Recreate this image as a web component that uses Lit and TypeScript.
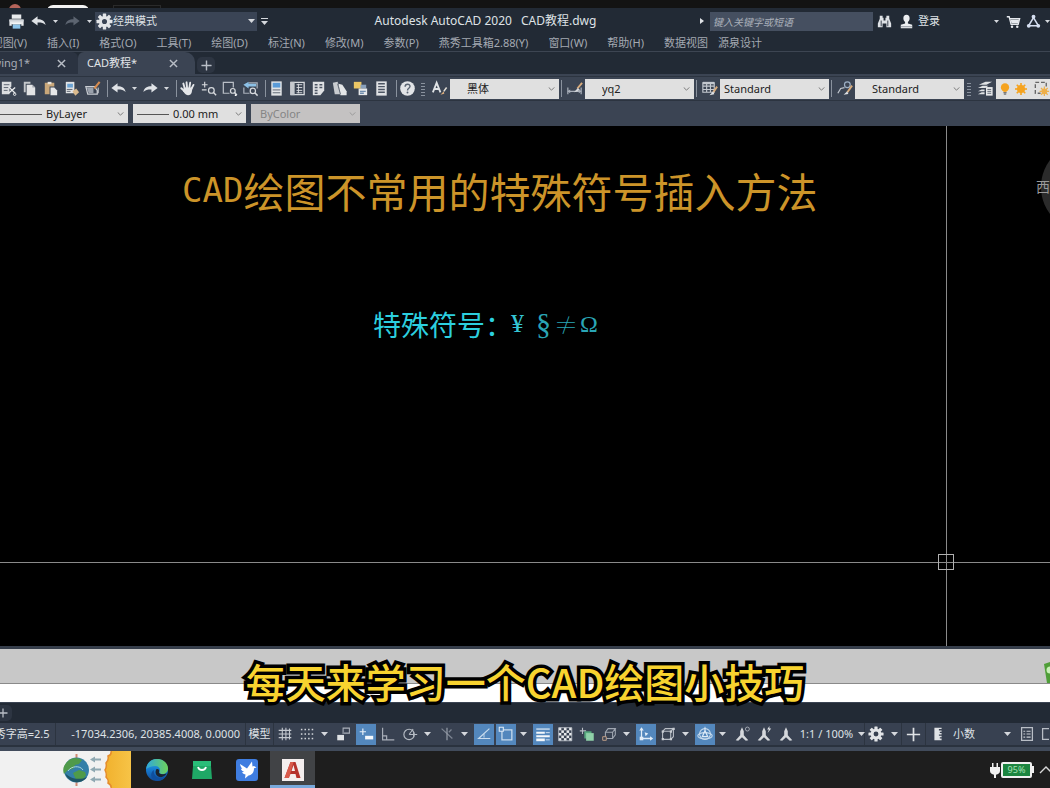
import { LitElement, html, css, svg, nothing } from "lit";
import { customElement, property } from "lit/decorators.js";
import { classMap } from "lit/directives/class-map.js";

const gearTeeth = [0, 45, 90, 135, 180, 225, 270, 315];
const gear = (fill: string) => svg`
  <g fill=${fill}>${gearTeeth.map(
    (a) => svg`<rect x="8.2" y="1.6" width="3.6" height="5" rx=".6" transform="rotate(${a} 10 10)"/>`
  )}</g><circle cx="10" cy="10" r="4.3" fill="none" stroke=${fill} stroke-width="3.2"/>`;

const undo = (c: string) => svg`<path fill=${c} d="M2.500 9.500 9 4.600v3.100c4.600 0 7.600 1.600 8.500 6-2.400-2.300-4.800-2.700-8.500-2.600v3.200z"/>`;
const redo = (c: string) => svg`<path fill=${c} d="M17.500 9.500 11 4.600v3.100c-4.600 0-7.600 1.600-8.500 6 2.400-2.300 4.800-2.700 8.500-2.600v3.200z"/>`;
const annot = svg`<path fill="#d5d8dc" d="M10 2.500 12 7v4.500l5 5.500-2.800.5L10 13.500l-4.200 4L3 17l5-5.500V7z"/>`;
const brush = svg`<path d="m18 4-5 6" stroke="#d9ac7c" stroke-width="2"/><path d="m13.500 9.500-4 4.500 4-1 2-2z" fill="#d5d8dc"/>`;

const glyphs: Record<string, unknown> = {
  printer: svg`<path fill="#e9ebed" d="M5 2.500h10V7H5zM2.500 8h15v6.500H15v-2H5v2H2.500z"/><path fill="#cfd3d8" d="M2.500 8h15v2h-15z"/><path fill="#8cc4ea" d="M6 13h8v4.500H6z"/><path stroke="#fff" d="M5.500 12.500h9" />`,
  undo: undo("#dfe2e6"),
  redo: redo("#dfe2e6"),
  redoOff: redo("#5c6470"),
  gear: gear("#e3e5e8"),
  binoculars: svg`<path fill="#dfe2e6" d="M5 4h3v2h1v3h2V6h1V4h3v3l2 5v4h-5v-4H8v4H3v-4l2-5z"/><path d="M6.500 9v6M13.500 9v6" stroke="#333b48"/>`,
  user: svg`<path fill="#eceef0" d="M10 3c2.200 0 3.300 1.500 3.300 3.600 0 1.700-.8 3.100-1.800 3.900v1.500l4.500 1.500V17H4v-3.500L8.500 12v-1.500c-1-.8-1.800-2.200-1.800-3.900C6.700 4.500 7.800 3 10 3z"/><path d="M4 15.500h12" stroke="#8e949e"/>`,
  cart: svg`<path d="M4 5h2.500l2 8H16l1.500-6H7" fill="none" stroke="#e6e9ee" stroke-width="1.400"/><path fill="#e6e9ee" d="M8 8h9l-1 4H9z"/><circle cx="9.500" cy="15.500" r="1.300" fill="#e6e9ee"/><circle cx="15" cy="15.500" r="1.300" fill="#e6e9ee"/>`,
  triangle: svg`<path d="M10 6 4.800 14.500h10.400z" fill="none" stroke="#d5def0" stroke-width="1.600"/><circle cx="10" cy="5" r="2" fill="#d5def0"/><circle cx="5" cy="14.500" r="2" fill="#d5def0"/><circle cx="15" cy="14.500" r="2" fill="#d5def0"/>`,
  cut: svg`<path fill="#dadcdf" d="M3 3h10v5l-2 2v6H3z"/><path d="M5 6h6M5 9h5M5 12h4" stroke="#5a6270"/><path d="m10 8 7 7M17 9l-7 6" stroke="#e8eaec" stroke-width="1.400"/><circle cx="16.500" cy="16" r="1.300" fill="none" stroke="#e8eaec"/>`,
  copy: svg`<path fill="#c3c6ca" d="M4 3h7v2H6v9H4z"/><path fill="#e2e3e5" d="M7 6h6l3 3v8H7z"/><path fill="#9ea3ab" d="M13 6v3h3z"/>`,
  paste: svg`<path fill="#c9a77a" d="M4 4h10v4H9v8H4z"/><path fill="#e8e4dc" d="M7 3h4v2.500H7z"/><path fill="#e6e7e9" d="M10 9h4l3 3v5h-7z"/>`,
  match: svg`<path fill="#e2e4e6" d="M4 3h9v12H4z"/><path fill="#6ba3d4" d="M5.500 5h6v4h-6z"/><path stroke="#59616e" d="M5 11h6M5 13h4"/><path fill="#d9b98d" d="m11 13 4-3 3 4-4 3.500z"/>`,
  block: svg`<path fill="none" stroke="#c9cdd3" stroke-width="1.300" d="M3 8h9l3 4v4H5z"/><path fill="#9aa1ac" d="M4 9h7v6H6z"/><path d="m17.500 3-5.500 7" stroke="#d58b4f" stroke-width="2.200"/><path d="M16 9v6" stroke="#dadde1"/>`,
  hand: svg`<path fill="none" stroke="#e4e6e9" stroke-width="2" stroke-linecap="round" d="M7 9.500 5.600 4.800M9.500 9 9 3.500M12 9l.8-5M14.300 10l2-3.800M7 13 3.500 9.700"/><path fill="#e4e6e9" d="M6 9h9.300l-.8 5c-.5 2-2 3.200-3.800 3.200S7 15.500 5.500 13z"/>`,
  zoomRt: svg`<path d="M3 6h6M6 3v6M3 11.500h5" stroke="#d7dade" stroke-width="1.200"/><circle cx="13" cy="12" r="3" fill="none" stroke="#d7dade" stroke-width="1.300"/><path d="m15.300 14.300 2.700 2.700" stroke="#d7dade" stroke-width="1.500"/>`,
  zoomWin: svg`<path d="M14 9V3.500H3.500V15H10" fill="none" stroke="#b9bec6" stroke-width="1.300"/><circle cx="13.500" cy="12.500" r="2.500" fill="none" stroke="#d7dade" stroke-width="1.300"/><path d="m15.300 14.300 2.500 2.500" stroke="#d7dade" stroke-width="1.500"/><circle cx="16.500" cy="17" r="1" fill="#fff"/>`,
  zoomPrev: svg`<path d="M3 9v6h6M17 10V4H8" fill="none" stroke="#aab0ba" stroke-width="1.300"/><path fill="#8cc0e6" d="M2.500 6 8 3v2h8v3H8v2z"/><circle cx="12.500" cy="12.500" r="2.800" fill="none" stroke="#d7dade" stroke-width="1.300"/><path d="m14.500 14.500 3 3" stroke="#d7dade" stroke-width="1.500"/>`,
  props: svg`<path fill="#e2e4e6" d="M4.500 2.500h11v15h-11z"/><path fill="#5a9bd8" d="M6 4h8v5H6z"/><path d="M6 11.500h8M6 14.500h8" stroke="#5a6270"/>`,
  center: svg`<path fill="none" stroke="#d7dade" stroke-width="1.400" d="M3 3.500h14v13H3z"/><path fill="#c5c9ce" d="M3 3h4v14H3z"/><path d="M9 6h6M9 9h6M9 12h6M9 14.500h6M11 5v10" stroke="#d7dade"/>`,
  palette: svg`<path fill="#dfe1e4" d="M4 3h12v9l-4 5H4z"/><path d="M6 6h3M11 6h3M6 9h3M11 9h3M6 12h3M6 15h3" stroke="#4c5563" stroke-width="1.600"/>`,
  sheets: svg`<path fill="#c9ccd0" d="m3 4 5-1 4 13H5z"/><path fill="#e4e6e8" d="m9 5 4 1 4.500 7v4H11z"/><path d="m8 5 3 11" stroke="#59616e"/>`,
  markup: svg`<path fill="#ecc765" d="M3 3h8v7H3z"/><path fill="#8aa0ba" d="M10 6h6v4h-6z"/><path fill="#e6e8ea" d="M8 10h9v7H8z"/><path stroke="#6f8cad" stroke-width="1.500" d="M9.500 13h6M9.500 15h4"/>`,
  calc: svg`<path fill="#dfe1e4" d="M4.500 2.500h11v15h-11z"/><path d="M6.500 5h7M6.500 8h7M6.500 11h7M6.500 14h7" stroke="#4c5563" stroke-width="1.500"/>`,
  help: svg`<circle cx="10" cy="10" r="7.700" fill="#e2e4e7"/><path d="M7.500 8.200c0-3.600 5.300-3.400 5.100-.3-.1 1.800-2.600 1.900-2.600 4.100" fill="none" stroke="#5a6472" stroke-width="1.500"/><circle cx="10" cy="14.200" r="1" fill="#5a6472"/>`,
  textStyle: svg`<path d="m3 14 4-10 4 10M4.700 10.500h4.600" fill="none" stroke="#dfe2e5" stroke-width="1.900"/><path d="m17.500 9-3 4" stroke="#e4e0d8" stroke-width="1.600"/><path d="M14.500 13 11 16.500l4-1z" fill="#d9ac7c"/>`,
  dimStyle: svg`<path d="M3 9v7M17 9v7M3 13h13" stroke="#aab0ba" stroke-width="1.300"/><path d="m2.500 13 3-2v4zM17.500 13l-3-2v4z" fill="#aab0ba"/>${brush}`,
  tableStyle: svg`<path d="M3 4h12v10H3zM3 7.500h12M3 11h12M7 4v10M11 4v10" fill="none" stroke="#c3c8cf" stroke-width="1.200"/><path fill="#c3c8cf" d="M3 3h12v2.500H3z"/><path d="m18 8-4 6" stroke="#d9ac7c" stroke-width="2"/><path d="m14 13-4 4 5-1z" fill="#dfe2e6"/>`,
  leaderStyle: svg`<path d="m3 15 3-5 4-1" fill="none" stroke="#c3c8cf" stroke-width="1.300"/><circle cx="13" cy="6" r="3" fill="none" stroke="#9eb0c5" stroke-width="1.300"/><path d="m18 7-5 7" stroke="#d9ac7c" stroke-width="2"/><path d="m13 13-4 3.500 5-.8z" fill="#dfe2e6"/>`,
  layers: svg`<path fill="#dfe2e5" d="m3 6 7-3h7l-6 3zM2 9.500 7 7h6l-3 2.500zM2 13l4-2h3v2zM2 16l4-2h3v2z"/><path fill="#e8eaec" d="M10.500 8.500h7v9h-7z"/><path stroke="#5a6270" d="M12 11h4M12 13h4M12 15h4"/>`,
  bulb: svg`<circle cx="10" cy="8" r="5.200" fill="#f5a31f"/><path fill="#f5a31f" d="M8 11h4v2.500H8z"/><path stroke="#777" stroke-width="1.500" d="M8 14.500h4M8.500 16.500h3"/>`,
  sun: svg`<g stroke="#f5a31f" stroke-width="2">${[0, 45, 90, 135].map((a) => svg`<path d="M10 2.500v15" transform="rotate(${a} 10 10)"/>`)}</g><circle cx="10" cy="10" r="5" fill="#f5a31f"/>`,
  viewport: svg`<path d="M15 8V3.500H3.500V15H9" fill="none" stroke="#666" stroke-width="1.400" stroke-dasharray="4 2"/><g stroke="#efb04a" stroke-width="1.300">${[0, 45, 90, 135].map((a) => svg`<path d="M13 8v10" transform="rotate(${a} 13 13)"/>`)}</g><circle cx="13" cy="13" r="3" fill="#efb04a"/>`,
  grid: svg`<path d="M7 3v14M11 3v14M15 4v12M3 6h14M3 10h14M3 14h14" stroke="#c3c8cf" stroke-width="1.200"/>`,
  dots: svg`<g fill="#d0d4d9">${[4, 8, 12, 16].flatMap((x) => [5, 10, 15].map((y) => svg`<rect x=${x - 0.8} y=${y - 0.8} width="1.700" height="1.700"/>`))}</g>`,
  infer: svg`<path fill="#dfe2e5" d="M2.500 11H10v6H2.500z"/><path d="M9 10V3.500h7V9h-6" fill="none" stroke="#aab0ba" stroke-width="1.200"/>`,
  dyn: svg`<path d="M3 7.500h7M6.500 4v7" stroke="#e8f0f8" stroke-width="1.300"/><path fill="#f4f8fc" d="M9 12h9v4H9z"/>`,
  ortho: svg`<path d="M4 3v13.500h13M4 12h4.500v4" fill="none" stroke="#a9afb9" stroke-width="1.300"/>`,
  polar: svg`<circle cx="9" cy="10.500" r="5.800" fill="none" stroke="#b4bac3" stroke-width="1.300"/><path d="M9 10.500h9M9 10.500l4.500-6M14 8v5" stroke="#b4bac3" stroke-width="1.200"/>`,
  iso: svg`<path d="M4 4l12 11" stroke="#7d8592" stroke-width="1.400"/><path d="M10 3v14" stroke="#9aa1ac" stroke-width="1.300"/><path d="m12 8 3-3" stroke="#7d8592" stroke-width="1.400"/>`,
  track: svg`<path d="M16 4 4 15h13" fill="none" stroke="#c9dcee" stroke-width="1.300"/><path stroke="#c9dcee" d="M10 10v4" />`,
  osnap: svg`<path d="M5.500 5.500h11v11h-11z" fill="none" stroke="#c9dcee" stroke-width="1.400"/><path d="M2.500 2.500H7V7H2.500z" fill="#5387bd" stroke="#e1ecf7" stroke-width="1.200"/>`,
  weight: svg`<path stroke="#f4f8fc" d="M2.500 4.500h15" stroke-width="1.200"/><path stroke="#f4f8fc" stroke-width="2.200" d="M2.500 8.500H12M2.500 12.500h15"/><path stroke="#f4f8fc" stroke-width="3" d="M2.500 16.500H12"/><path stroke="#dce9f6" d="M13 8.500h4.500M13 16.500h4.500"/>`,
  checker: svg`<g fill="#e8eaec">${[0, 1, 2, 3, 4].flatMap((r) => [0, 1, 2, 3, 4].filter((c) => (r + c) % 2 === 0).map((c) => svg`<rect x=${3 + c * 2.9} y=${3 + r * 2.9} width="2.900" height="2.900"/>`))}</g><path d="M3 3h14.500v14.500H3z" fill="none" stroke="#b9bec6"/>`,
  cycle: svg`<path d="M5 3v7M2 6.500h7" stroke="#b9bec6" stroke-width="1.200"/><path fill="#57a97e" d="M7 7h8v8H7z"/><path fill="#8fd1a8" d="M9 9h8.500v8.500H9z"/>`,
  solid: svg`<path d="M6 8h8v7H6zM6 8l3-4h8l-3 4M17 4v7l-3 4" fill="none" stroke="#9fa6b1" stroke-width="1.200"/><path d="M3 13h4v4H3z" fill="#3a4251" stroke="#c9a58b"/>`,
  ucs: svg`<path d="M5 4v11h11" fill="none" stroke="#e1ecf7" stroke-width="1.400"/><path fill="#e1ecf7" d="M2.500 6 5 2.500 7.500 6zM14.500 12.500 18 15l-3.500 2.500zM8.500 8l4 1.500-3 3z"/><path fill="#e1ecf7" d="M3 13h4v4H3z"/>`,
  filter: svg`<path d="M4 7h9v9H4zM4 7l3-3h9v9l-3 3M13 7l3-3" fill="none" stroke="#b9bec6" stroke-width="1.200"/><path fill="#c9cdd3" d="M3 6h2.500v2.500H3zM12 6h2.500v2.500H12zM3 14.500h2.500V17H3zM12 14.500h2.500V17H12zM15 3h2.500v2.500H15z"/>`,
  gizmo: svg`<circle cx="10" cy="10" r="6" fill="none" stroke="#c9dcee" stroke-width="1.200"/><ellipse cx="10" cy="12" rx="8" ry="3.500" fill="none" stroke="#c9dcee" stroke-width="1.200"/><path d="m7 13 3-7 3 7z" fill="none" stroke="#dce9f6" stroke-width="1.300"/><path d="M10 2v4" stroke="#dce9f6"/>`,
  annoVis: svg`${annot}<circle cx="16" cy="4.500" r="2.200" fill="none" stroke="#aab0ba"/>`,
  annoAuto: svg`${annot}<path d="m16 1-2.500 4h2L14 9l4-5h-2z" fill="#dfe2e5"/>`,
  anno: annot,
  plus: svg`<path d="M10 3v14M3 10h14" stroke="#dfe2e5" stroke-width="1.800"/>`,
  ruler: svg`<path fill="#dfe2e5" d="M6 3h8v1.500h-3V6h3v1.500h-2V9h2v1.500h-3V12h3v1.500h-2V15h2v2H6z"/>`,
  list: svg`<path fill="none" stroke="#b9bec6" stroke-width="1.400" d="M4 3h12v14H4z"/><path d="M6 7h2M9.500 7H14M6 10h2M9.500 10H14M6 13.500h2M9.500 13.500H14" stroke="#c9cdd3" stroke-width="1.200"/>`,
  windowBox: svg`<path fill="none" stroke="#b9bec6" stroke-width="1.400" d="M4 4h12v12H4z"/>`,
};

@customElement("cad-icon")
class CadIcon extends LitElement {
  @property() name = "";
  static styles = css`
    :host { display: block; width: 19px; height: 19px; flex: none; }
    .art { display: block; width: 100%; height: 100%; }
  `;
  render() {
    return html`<svg class="art" viewBox="0 0 20 20" aria-hidden="true">${glyphs[this.name] ?? nothing}</svg>`;
  }
}

type Cell = { icon: string; label: string; on?: boolean } | "caret";

const editTools: (string | "caret" | "sep")[] = [
  "cut", "copy", "paste", "match", "block", "sep",
  "undo", "caret", "redo", "caret", "sep",
  "hand", "zoomRt", "zoomWin", "zoomPrev", "sep",
  "props", "center", "palette", "sheets", "markup", "calc", "sep", "help",
];

const menus = ["视图(V)", "插入(I)", "格式(O)", "工具(T)", "绘图(D)", "标注(N)", "修改(M)", "参数(P)", "燕秀工具箱2.88(Y)", "窗口(W)", "帮助(H)"];

const statusCells: Cell[] = [
  { icon: "grid", label: "栅格" }, { icon: "dots", label: "捕捉" }, "caret",
  { icon: "infer", label: "推断约束" }, { icon: "dyn", label: "动态输入", on: true },
  { icon: "ortho", label: "正交" }, { icon: "polar", label: "极轴追踪" }, "caret",
  { icon: "iso", label: "等轴测草图" }, "caret",
  { icon: "track", label: "对象捕捉追踪", on: true }, { icon: "osnap", label: "对象捕捉", on: true }, "caret",
  { icon: "weight", label: "线宽", on: true }, { icon: "checker", label: "透明度" },
  { icon: "cycle", label: "选择循环" }, { icon: "solid", label: "三维对象捕捉" }, "caret",
  { icon: "ucs", label: "动态 UCS", on: true }, { icon: "filter", label: "选择过滤" }, "caret",
  { icon: "gizmo", label: "小控件", on: true }, "caret",
  { icon: "annoVis", label: "注释可见性" }, { icon: "annoAuto", label: "自动缩放" }, { icon: "anno", label: "注释比例" },
];

const caret = html`<svg class="tri" viewBox="0 0 7 4" aria-hidden="true"><path d="M0 0h7L3.500 4z" /></svg>`;
const cross = html`<svg class="cross" viewBox="0 0 10 10" aria-hidden="true"><path d="m1 1 8 8M9 1 1 9" /></svg>`;

@customElement("app-root")
class AppRoot extends LitElement {
  static styles = css`
    :host {
      display: flex;
      flex-direction: column;
      min-height: 100vh;
      overflow: hidden;
      position: relative;
      background: #222a35;
      color: #dfe2e6;
      font: 11px/16px "Noto Sans", "Noto Sans CJK SC", sans-serif;
    }
    * { box-sizing: border-box; }
    button, select, input { font: inherit; color: inherit; margin: 0; padding: 0; border: 0; background: none; border-radius: 0; }
    button { display: flex; align-items: center; justify-content: center; flex: none; white-space: nowrap; }
    select { appearance: none; min-width: 0; }
    .tri { width: 7px; height: 4px; fill: #d5d8dd; flex: none; }
    .cross { width: 9px; height: 9px; stroke: #b9bec6; stroke-width: 1.6; fill: none; }

    .strip { display: flex; height: 8px; background: #131313; overflow: hidden; }
    .strip-dot { width: 12px; height: 12px; margin: 4px 0 0 9px; border-radius: 6px; background: #b5645a; }
    .strip-pill { width: 42px; height: 12px; margin: 5px 0 0 26px; border-radius: 6px; background: #f3f3f3; }
    .strip-line { width: 48px; height: 4px; margin: 5px 0 0 24px; border: 1px solid #2a2a2a; }

    .title-bar { display: flex; align-items: center; height: 26px; padding-left: 6px; }
    .tool { width: 21px; height: 21px; }
    .drop { width: 11px; height: 21px; }
    .small .tri { width: 5px; height: 3px; }
    .quick { display: flex; align-items: center; gap: 1px; flex: none; }
    .combo { display: grid; align-items: center; flex: none; }
    .combo > * { grid-area: 1 / 1; }
    .combo > svg, .combo > cad-icon { pointer-events: none; }
    .workspace { width: 162px; height: 19px; margin-left: -1px; background: #3a4455; }
    .workspace select { width: 100%; height: 19px; padding-left: 18px; }
    .workspace .tri { justify-self: end; margin-right: 2px; }
    .more { width: 14px; flex-direction: column; gap: 2px; }
    .more::before { content: ""; width: 7px; height: 1px; background: #d5d8dd; }
    .title { display: flex; justify-content: center; gap: 9px; flex: 1; min-width: 0; white-space: nowrap; font-weight: 400; margin: 0; font-size: 12px; }
    .account { display: flex; align-items: center; flex: none; }
    .play { width: 4px; height: 6px; fill: #dfe2e6; margin-right: 6px; }
    .search { width: 163px; height: 19px; padding: 0 3px; background: #454f60; }
    .search::placeholder { color: #aab0ba; opacity: 1; font-style: italic; font-size: 10px; }
    .find { margin-left: 1px; }
    .login { gap: 2px; margin-right: 53px; margin-left: 2px; }
    .cart { margin-left: 3px; }
    .account .more-drop { width: 6px; }

    .menu { display: flex; align-items: center; gap: 20px; height: 18px; color: #a4a9b2; border-bottom: 1px solid #3d4552; }
    .menu .cut-left { width: 27px; overflow: hidden; justify-content: flex-end; }
    .menu .plain + .plain { margin-left: -10px; }

    .tabs { display: flex; align-items: stretch; height: 24px; border-bottom: 2px solid #3b4453; }
    .tab { display: flex; align-items: center; background: #2b3341; border-radius: 0 6px 0 0; color: #a9aeb7; }
    .tab .name { overflow: hidden; }
    .tab .cross { margin-top: 1px; }
    .tab.back { width: 78px; }
    .back .name { width: 30px; justify-content: flex-end; margin-right: 27px; }
    .tab.front { width: 117px; padding-left: 9px; background: #3b4453; color: #e2e4e8; border-radius: 6px 10px 0 0; justify-content: space-between; padding-right: 17px; }
    .add { width: 18px; height: 16px; margin: 5px 0 0 2px; border-radius: 5px; background: #2d3542; }
    .add .cross { transform: rotate(45deg); }

    .tools { display: flex; align-items: center; height: 25px; margin-left: -2px; background: #3b4453; border-top: 1px solid #2c3440; border-bottom: 1px solid #2c3440; }
    .sep { width: 5px; height: 17px; border-right: 1px solid #8a929e; flex: none; }
    .grip { width: 4px; height: 14px; margin: 0 3px; flex: none; background: radial-gradient(circle, #8a929e 35%, transparent 45%) 0 0 / 2px 3px; }
    .field { height: 20px; background: #e0e0e0; color: #222; width: 109px; }
    .field select { width: 100%; height: 20px; padding-left: 17px; }
    .field.near select { padding-left: 4px; }
    .chev { width: 7px; height: 4px; justify-self: end; margin-right: 4px; fill: none; stroke: #777; stroke-width: 1.2; }
    .style-tool { width: 21px; height: 21px; }
    .split { width: 4px; height: 17px; border-left: 1px solid #8a929e; margin-left: 2px; flex: none; margin-right: -1px; }
    .grip + .style-tool { width: 22px; }
    .layer-list { display: flex; align-items: center; flex: 1; min-width: 52px; overflow: hidden; height: 20px; background: #e0e0e0; }
    .layer-list cad-icon { width: 16px; height: 16px; }
    .layer-list cad-icon:first-child { margin-left: 1px; }
    .layer-list cad-icon:last-child { width: 19px; height: 19px; margin-left: 3px; }

    .style-row { display: flex; align-items: center; gap: 5px; height: 25px; background: #3b4453; }
    .style-row .field { height: 19px; }
    .style-row .stroke { height: 1px; background: #555; }
    .style-row .line-type { width: 128px; }
    .line-type .stroke { width: 42px; }
    .line-type select { padding-left: 46px; }
    .style-row .line-weight { width: 113px; }
    .line-weight .stroke { width: 32px; margin-left: 4px; }
    .line-weight select { padding-left: 40px; }
    .style-row .plot { width: 109px; background: #c4c2c2; color: #858585; }
    .plot select { padding-left: 9px; opacity: 1; color: #858585; }
    .plot .chev { stroke: #999; }

    .canvas { position: relative; flex: 1; min-height: 480px; background: #000; overflow: hidden; border-bottom: 3px solid #363e4b; }
    .drawing-title, .symbols { position: absolute; margin: 0; font-weight: 400; white-space: nowrap; display: flex; align-items: center; }
    .drawing-title { left: 182px; top: 34px; font: 41px/60px "Noto Sans CJK SC", sans-serif; color: #cc9429; }
    .drawing-title .latin { font: 34px/60px "DejaVu Sans Mono", monospace; }
    .symbols { left: 373px; top: 178px; font: 28px/40px "Noto Sans CJK SC", sans-serif; color: #2ccfdf; }
    .marks { font: 24px/40px "Liberation Serif", serif; color: #2aa5b5; display: flex; }
    .marks .yen { font-size: 26px; color: #35c5d5; width: 25px; margin-left: -2px; }
    .marks .sect { width: 18px; font-size: 30px; }
    .marks .neq { width: 26px; font-family: "Noto Sans CJK SC", sans-serif; font-weight: 100; }
    .cross-x, .cross-y, .pick { position: absolute; }
    .cross-x { left: 0; right: 0; bottom: 83px; height: 1px; background: #8a8a8a; }
    .cross-y { top: 0; bottom: 0; right: 103px; width: 1px; background: #8a8a8a; }
    .pick { width: 16px; height: 16px; right: 96px; bottom: 76px; border: 1px solid #b0b0b0; }
    .cube { position: absolute; width: 90px; height: 90px; right: -81px; top: 16px; border-radius: 45px; background: #2b2b2b; }
    .west { position: absolute; right: 0; top: 53px; width: 14px; font-size: 14px; color: #9a9a9a; }

    .command { position: relative; display: flex; flex-direction: column; }
    .history { display: flex; justify-content: flex-end; align-items: flex-end; height: 35px; background: #c8c8c8; border-bottom: 1px solid #8a8a8a; }
    .sticker { width: 6px; height: 21px; }
    .prompt { height: 18px; width: 100%; background: #fff; }
    .caption { position: absolute; left: 0; right: 0; top: 2px; margin: 0; text-align: center; white-space: nowrap; font: 500 40px/60px "Noto Sans CJK SC", sans-serif; color: #f8d32f; -webkit-text-stroke: 7px #000; paint-order: stroke fill; stroke-linejoin: round; pointer-events: none; }

    .layouts { display: flex; align-items: center; height: 21px; background: #222a35; border-top: 1px solid #3b4453; }
    .layouts .add { margin: 0 0 0 -6px; }
    .layouts .add .cross { width: 8px; height: 8px; }
    .status { display: flex; align-items: center; height: 28px; padding-bottom: 6px; background: linear-gradient(#384151 22px, #2a323e 22px, #2a323e 24px, #414b5b 24px); }
    .height { width: 56px; height: 22px; border-right: 1px solid #2c3440; display: flex; justify-content: flex-end; align-items: center; padding-right: 5px; overflow: hidden; white-space: nowrap; }
    .coords { width: 192px; height: 22px; border-right: 1px solid #2c3440; display: flex; justify-content: flex-end; align-items: center; padding-right: 5px; white-space: nowrap; }
    .space { width: 28px; height: 22px; border-right: 1px solid #2c3440; }
    .cell { width: 22px; height: 21px; border: solid transparent; border-width: 0 1px; background-clip: padding-box; }
    .cell.on { background-color: #5387bd; }
    .cell cad-icon { width: 18px; height: 18px; }
    .cell-drop { width: 13px; height: 22px; margin-right: 2px; }
    .scale { width: 68px; height: 22px; gap: 5px; border-right: 1px solid #2c3440; padding-left: 4px; }
    .gear-drop { width: 15px; height: 22px; border-right: 1px solid #2c3440; }
    .isolate { width: 24px; height: 22px; border-right: 1px solid #2c3440; margin-right: 1px; }
    .units { width: 67px; height: 22px; }
    .units select { width: 100%; height: 22px; padding-left: 4px; }
    .units .tri { justify-self: end; margin-right: 5px; }
    .end { margin-left: auto; display: flex; }
    .end .last { width: 12px; overflow: hidden; justify-content: flex-start; }

    .taskbar { display: flex; align-items: stretch; height: 37px; background: #1e1e1e; }
    .weather { width: 131px; overflow: hidden; background: #f1f1f1; justify-content: flex-end; }
    .weather svg { width: 71px; height: 37px; }
    .app { width: 45px; }
    .app svg { width: 24px; height: 24px; }
    .app.first { margin-left: 3px; }
    .app.active { background: #414346; border-bottom: 3px solid #79a9dc; margin-left: 1px; }
    .app.active svg { margin-top: 3px; }
    .tray { display: flex; align-items: center; margin-left: auto; }
    .plug { width: 10px; height: 18px; }
    .battery { display: flex; align-items: center; justify-content: center; width: 31px; height: 16px; border: 2px solid #f0f0f0; border-radius: 2px; background: #1c8540; color: #a7e0b5; font-size: 9px; line-height: 12px; margin-left: 1px; }
    .nub { width: 2px; height: 7px; background: #f0f0f0; }
    .up { width: 16px; overflow: hidden; justify-content: flex-end; }
    .up svg { width: 11px; height: 8px; stroke: #d8d8d8; stroke-width: 1.4; fill: none; }
  `;

  private chevron = html`<svg class="chev" viewBox="0 0 8 5" aria-hidden="true"><path d="m.5.5 3.500 3.500L7.500.5" /></svg>`;

  private field(value: string, label: string, kind = "") {
    return html`<label class="combo field ${kind}"><select aria-label=${label}><option>${value}</option></select>${this.chevron}</label>`;
  }

  private tool(name: string) {
    if (name === "sep") return html`<span class="sep"></span>`;
    if (name === "caret") return html`<button class="drop small" aria-label="更多">${caret}</button>`;
    return html`<button class="tool" aria-label=${name}><cad-icon name=${name}></cad-icon></button>`;
  }

  private titleBar() {
    return html`
      <header class="title-bar">
        <div class="quick">
          <button class="tool" aria-label="打印"><cad-icon name="printer"></cad-icon></button>
          <button class="tool" aria-label="放弃"><cad-icon name="undo"></cad-icon></button>
          <button class="drop small" aria-label="更多">${caret}</button>
          <button class="tool" aria-label="重做"><cad-icon name="redoOff"></cad-icon></button>
          <button class="drop small" aria-label="更多">${caret}</button>
          <label class="combo workspace">
            <select aria-label="工作空间"><option>经典模式</option></select>
            <cad-icon name="gear"></cad-icon>${caret}
          </label>
        </div>
        <button class="more" aria-label="自定义">${caret}</button>
        <h1 class="title"><span>Autodesk AutoCAD 2020</span><span>CAD教程.dwg</span></h1>
        <div class="account">
          <svg class="play" viewBox="0 0 4 6" aria-hidden="true"><path d="M0 0l4 3-4 3z" /></svg>
          <input class="search" type="search" aria-label="搜索" placeholder="键入关键字或短语" />
          <button class="tool find" aria-label="查找"><cad-icon name="binoculars"></cad-icon></button>
          <button class="login"><cad-icon name="user"></cad-icon>登录</button>
          <button class="more-drop small" aria-label="更多">${caret}</button>
          <button class="tool cart" aria-label="购物车"><cad-icon name="cart"></cad-icon></button>
          <button class="tool" aria-label="应用"><cad-icon name="triangle"></cad-icon></button>
          <button class="more-drop small" aria-label="更多">${caret}</button>
        </div>
      </header>`;
  }

  private toolbars() {
    return html`
      <div class="tools">
        ${editTools.map((t) => this.tool(t))}
        <span class="grip"></span>
        <button class="style-tool" aria-label="文字样式"><cad-icon name="textStyle"></cad-icon></button>
        ${this.field("黑体", "文字样式")}
        <span class="split"></span>
        <button class="style-tool" aria-label="标注样式"><cad-icon name="dimStyle"></cad-icon></button>
        ${this.field("yq2", "标注样式")}
        <span class="split"></span>
        <button class="style-tool" aria-label="表格样式"><cad-icon name="tableStyle"></cad-icon></button>
        ${this.field("Standard", "表格样式", "near")}
        <span class="split"></span>
        <button class="style-tool" aria-label="引线样式"><cad-icon name="leaderStyle"></cad-icon></button>
        ${this.field("Standard", "引线样式")}
        <span class="grip"></span>
        <button class="style-tool" aria-label="图层特性"><cad-icon name="layers"></cad-icon></button>
        <button class="layer-list" aria-label="图层">
          <cad-icon name="bulb"></cad-icon><cad-icon name="sun"></cad-icon><cad-icon name="viewport"></cad-icon>
        </button>
      </div>
      <div class="style-row">
        <label class="combo field line-type"><select aria-label="线型"><option>ByLayer</option></select><span class="stroke"></span>${this.chevron}</label>
        <label class="combo field line-weight"><select aria-label="线宽"><option>0.00 mm</option></select><span class="stroke"></span>${this.chevron}</label>
        <label class="combo field plot"><select aria-label="打印样式" disabled><option>ByColor</option></select>${this.chevron}</label>
      </div>`;
  }

  private statusBar() {
    return html`
      <footer class="status">
        <span class="height">燕秀字高=2.5</span>
        <span class="coords">-17034.2306, 20385.4008, 0.0000</span>
        <button class="space">模型</button>
        ${statusCells.map((c) =>
          c === "caret"
            ? html`<button class="cell-drop" aria-label="更多">${caret}</button>`
            : html`<button class=${classMap({ cell: true, on: !!c.on })} aria-label=${c.label}><cad-icon name=${c.icon}></cad-icon></button>`
        )}
        <button class="scale">1:1 / 100% ${caret}</button>
        <button class="cell" aria-label="设置"><cad-icon name="gear"></cad-icon></button>
        <button class="gear-drop" aria-label="更多">${caret}</button>
        <button class="isolate" aria-label="添加"><cad-icon name="plus"></cad-icon></button>
        <button class="cell" aria-label="单位"><cad-icon name="ruler"></cad-icon></button>
        <label class="combo units"><select aria-label="单位格式"><option>小数</option></select>${caret}</label>
        <div class="end">
          <button class="cell" aria-label="快捷特性"><cad-icon name="list"></cad-icon></button>
          <button class="cell last" aria-label="全屏"><cad-icon name="windowBox"></cad-icon></button>
        </div>
      </footer>`;
  }

  private taskbar() {
    return html`
      <nav class="taskbar">
        <button class="weather" aria-label="资讯">
          <svg viewBox="0 0 71 37">
            <defs><linearGradient id="sun" x2="1"><stop stop-color="#f1b12d" /><stop offset="1" stop-color="#f7c549" /></linearGradient></defs>
            <path d="M16.500 3v32" stroke="#d08a72" stroke-width="2" />
            <circle cx="16.500" cy="19" r="12.500" fill="#347fa8" />
            <path fill="#4f9a4a" d="M7 11c4-5 11-5 15-2l-3 4-4 1-2 4-5 1-4 4c-2-5 0-9 3-12zM13 22l6-3 6 2 1 3c-2 4-5 6-9 7z" />
            <path fill="#1e5567" d="M5 22c4 5 14 8 22 4-4 7-18 8-22-4z" /><path fill="none" stroke="#a8d5dd" d="M8 20c3-5 12-6 15-1" />
            <path d="M41 8.500H33M41 18.500H33M41 28.500H33" stroke="#8fa8b2" stroke-width="2" />
            <path fill="#8fa8b2" d="m30 8.500 5-3v6zM30 18.500l5-3v6zM30 28.500l5-3v6z" />
            <path fill="url(#sun)" stroke="#e58c2c" stroke-width="1.500" d="M73 -1H51q1 5-3 6 1 4-2 7 1 4-1 7 2 4 1 7 3 3 2 6 4 2 3 6h22z" />
          </svg>
        </button>
        <button class="app first" aria-label="Edge">
          <svg viewBox="0 0 24 24">
            <defs>
              <linearGradient id="eb" x1="0" y1="0" x2="0" y2="1"><stop stop-color="#2cb4e8" /><stop offset=".5" stop-color="#1679ce" /><stop offset="1" stop-color="#114a98" /></linearGradient>
              <linearGradient id="eg" x1="0" x2="1"><stop stop-color="#2fa8dc" /><stop offset="1" stop-color="#6ed25a" /></linearGradient>
            </defs>
            <circle cx="12" cy="12" r="11" fill="url(#eb)" />
            <path fill="url(#eg)" d="M1.200 11C2 4 7 1 12 1c7 0 11 5 11 9.500 0 3.500-2.500 5.500-5.500 5.500-2.500 0-3.500-1-3-2 1.500-3-.5-6-4-6-4 0-7.500 1.500-9.300 3z" />
            <path fill="#0f4f9f" d="M9 12c-1 4 2 8 6.500 8 2 0 4-.7 5.500-2-3 5-9 6-13 3-3-3-2-7 1-9z" />
            <path fill="#1c2430" d="M11.500 11c2-.5 3 1 2.600 2.500-.6 1.500.8 2.800 3.400 2.800 1.300 0 3-.3 4.200-1-1.500 3-4.500 4.300-7 3.700-3.800-.8-5.200-5-3.200-8z" />
          </svg>
        </button>
        <button class="app" aria-label="商店">
          <svg viewBox="0 0 24 24"><path fill="#1fa866" d="M3 3h18v5l1 13H2L3 8z" /><path fill="#29bd78" d="M3 3h18v5H3z" /><path d="M8 9c1 4 7 4 8 0" fill="none" stroke="#fff" stroke-width="1.800" /></svg>
        </button>
        <button class="app" aria-label="飞鸟">
          <svg viewBox="0 0 24 24"><rect x="1" y="1" width="22" height="22" rx="3" fill="#3f7de0" /><path fill="#fff" d="m5 6 7 4.500L17 3.500l.5 5 1.500-.5 2.500 1.500-2.500.8c0 4-2 6.700-5.500 7.200L10 20.500l.5-4C8 16 7 14.500 7 14.500l2-.7c-2.500-.8-3.200-3-3.200-3l1.500-.1C5.500 9 5 6 5 6z" /></svg>
        </button>
        <button class="app active" aria-label="AutoCAD">
          <svg viewBox="0 0 24 24"><path fill="#f4eeee" d="M1 1h22v22H1z" /><path fill="#b5322c" fill-rule="evenodd" d="M9.500 4h5L19.500 20h-4l-1-4h-5l-2 4h-4zM10.500 13h3.500l-1.500-6z" /><path fill="#d95a4b" d="M9.500 4h3L8 20H3.500z" /></svg>
        </button>
        <div class="tray">
          <svg class="plug" viewBox="0 0 10 18" aria-hidden="true"><path fill="#f0f0f0" d="M2 2h1.500v4h3V2H8v4h2v4c0 2-2 3.500-4 3.700V17H4v-3.300C2 13.500 0 12 0 10V6h2z" /></svg>
          <span class="battery">95%</span><span class="nub"></span>
          <button class="up" aria-label="显示隐藏的图标"><svg viewBox="0 0 11 8"><path d="m1 7 6-6 6 6" /></svg></button>
        </div>
      </nav>`;
  }

  render() {
    return html`
      <div class="strip"><span class="strip-dot"></span><span class="strip-pill"></span><span class="strip-line"></span></div>
      ${this.titleBar()}
      <nav class="menu">
        ${menus.map((m, i) => html`<button class=${i === 0 ? "cut-left" : ""}>${m}</button>`)}
        <button class="plain">数据视图</button><button class="plain">源泉设计</button>
      </nav>
      <div class="tabs">
        <div class="tab back"><button class="name">Drawing1*</button><button aria-label="关闭">${cross}</button></div>
        <div class="tab front"><button class="name">CAD教程*</button><button aria-label="关闭">${cross}</button></div>
        <button class="add" aria-label="新图形">${cross}</button>
      </div>
      ${this.toolbars()}
      <main class="canvas">
        <h2 class="drawing-title"><span class="latin">CAD</span>绘图不常用的特殊符号插入方法</h2>
        <p class="symbols">特殊符号：<span class="marks"><span class="yen">¥</span><span class="sect">§</span><span class="neq">≠</span><span class="ohm">Ω</span></span></p>
        <span class="cross-x"></span><span class="cross-y"></span><span class="pick"></span>
        <span class="cube"></span><span class="west">西</span>
      </main>
      <section class="command">
        <div class="history"><svg class="sticker" viewBox="0 0 6 21" aria-hidden="true"><path fill="#4f9e38" d="M0 2 6 0v21H3z" /><circle cx="6" cy="8" r="3.500" fill="#c9f0b8" /></svg></div>
        <input class="prompt" aria-label="命令" />
        <p class="caption">每天来学习一个CAD绘图小技巧</p>
      </section>
      <div class="layouts"><button class="add" aria-label="新布局">${cross}</button></div>
      ${this.statusBar()}
      ${this.taskbar()}
    `;
  }
}
